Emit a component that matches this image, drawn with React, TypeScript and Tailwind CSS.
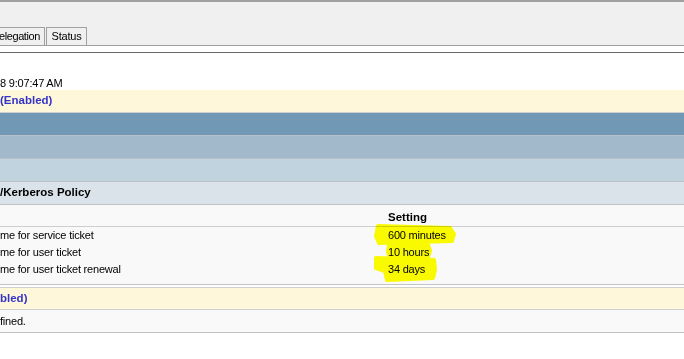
import React from "react";

const font = { fontFamily: '"Liberation Sans", Arial, sans-serif' };

const ROWS = [
  { name: "me for service ticket", value: "600 minutes" },
  { name: "me for user ticket", value: "10 hours" },
  { name: "me for user ticket renewal", value: "34 days" },
];

function Highlights() {
  // hand-drawn marker strokes over the setting values
  return (
    <svg
      className="pointer-events-none absolute left-0 top-0 mix-blend-multiply"
      width="684"
      height="359"
      viewBox="0 0 684 359"
    >
      <g fill="#ffff00" stroke="#ffff00" strokeWidth="4" strokeLinejoin="round">
        <path d="M378 226 L450 228 L454 234 L452 241 L379 243 L376 236 Z" />
        <path d="M389 245 L428 245 L430 251 L428 257 L390 258 L388 252 Z" />
        <path d="M376 258 L434 260 L435 270 L433 278 L387 280 L385 271 L376 268 Z" />
      </g>
    </svg>
  );
}

export default function App() {
  return (
    <div
      className="relative h-[359px] w-[684px] overflow-hidden bg-white text-[11px] tracking-[-0.2px] text-black"
      style={font}
    >
      {/* window chrome + tabs */}
      <div className="flex h-[46px] items-end border-t-2 border-b border-[#a0a0a0] bg-[#f0f0f0]">
        <div className="flex h-[18px] w-[45px] items-center justify-end border-t border-r border-[#a0a0a0] pr-[4px] leading-none tracking-[-0.4px]">
          elegation
        </div>
        <div className="ml-[1px] flex h-[18px] w-[41px] items-center justify-center border-t border-r border-l border-[#a0a0a0] leading-none">
          Status
        </div>
      </div>
      <div className="h-[6px]" />
      <div className="h-px bg-[#696969]" />

      <div className="h-[37px] pt-[24px] leading-[13px]">8 9:07:47 AM</div>

      <div className="flex h-[23px] items-center border-b border-[#cfcfcf] bg-[#fef7d9] text-[11.5px] font-bold tracking-normal text-[#3434c8]">
        (Enabled)
      </div>
      <div className="h-[23px] border-b border-[#b9c0c6] bg-[#7198b4]" />
      <div className="h-[23px] border-b border-[#b9c0c6] bg-[#a2b9cc]" />
      <div className="h-[23px] border-b border-[#b9c0c6] bg-[#c1d3df]" />
      <div className="flex h-[23px] items-center border-b border-[#c3c3c3] bg-[#dae3ea] text-[11.5px] font-bold tracking-normal">
        /Kerberos Policy
      </div>

      <div className="border-b border-[#c3c3c3] bg-[#f9f9f9] pb-[6px]">
        <div className="grid h-[22px] grid-cols-[388px_1fr] border-b border-[#cfcfcf] pt-[6px] leading-[13px]">
          <div />
          <div className="text-[11.5px] font-bold tracking-normal">Setting</div>
        </div>
        {ROWS.map((r) => (
          <div key={r.name} className="grid h-[17px] grid-cols-[388px_1fr] items-center leading-none">
            <div>{r.name}</div>
            <div>{r.value}</div>
          </div>
        ))}
      </div>

      <div className="h-[2px]" />
      <div className="flex h-[23px] items-center border-t border-b border-[#cfcfcf] bg-[#fef7d9] text-[11.5px] font-bold tracking-normal text-[#3434c8]">
        bled)
      </div>
      <div className="flex h-[23px] items-center border-b border-[#c3c3c3] bg-[#f9f9f9]">fined.</div>

      <Highlights />
    </div>
  );
}
